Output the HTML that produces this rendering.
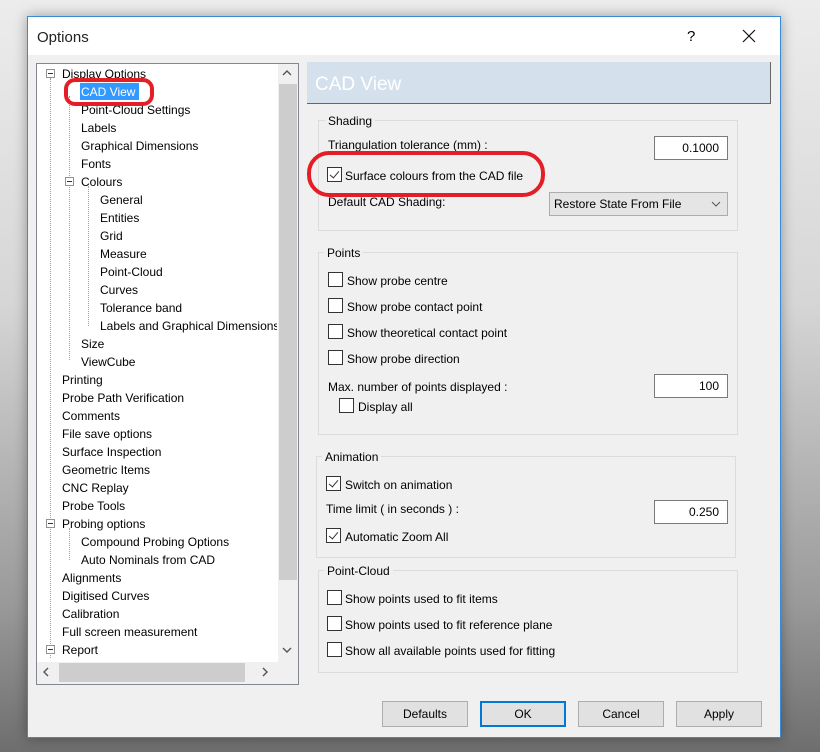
<!DOCTYPE html>
<html><head><meta charset="utf-8"><style>
*{box-sizing:border-box;margin:0;padding:0}
body{width:820px;height:752px;overflow:hidden;position:relative;font-family:"Liberation Sans",sans-serif;font-size:12px;color:#000;
background:linear-gradient(to bottom,#ececec 0%,#d6d6d6 40%,#9a9a9a 80%,#6e6e6e 100%)}
.a{position:absolute}
#dlg{left:27px;top:16px;width:754px;height:722px;background:#f0f0f0;border:1px solid #3b8ad6;box-shadow:0 0 12px rgba(0,0,0,.35)}
#title{left:0;top:0;width:752px;height:38px;background:#fff}
.t{position:absolute;white-space:nowrap;line-height:14px;margin-top:1px}
.tree{left:36px;top:63px;width:263px;height:622px;background:#fff;border:1px solid #828790;overflow:hidden}
.gb{position:absolute;border:1px solid #dcdcdc}
.gl{position:absolute;background:#f0f0f0;padding:0 3px;line-height:14px}
.cb{position:absolute;width:15px;height:15px;border:1px solid #333;background:#fff}
.cb.c::after{content:"";position:absolute;left:4px;top:1px;width:4px;height:8px;border:solid #333;border-width:0 1.3px 1.3px 0;transform:rotate(40deg)}
.in{position:absolute;height:24px;background:#fff;border:1px solid #7a7a7a;text-align:right;padding-right:8px;line-height:22px}
.btn{position:absolute;top:701px;width:86px;height:26px;background:#e1e1e1;border:1px solid #adadad;text-align:center;line-height:24px}
.dv{position:absolute;border-left:1px dotted #a0a0a0}
.pm{position:absolute;width:9px;height:9px;border:1px solid #919191;background:#fff}
.pm::after{content:"";position:absolute;left:1px;top:3px;width:5px;border-top:1px solid #333}
</style></head><body>
<div id="dlg" class="a">
 <div id="title" class="a"></div>
 <div class="t" style="left:9px;top:11px;font-size:15px;color:#222;line-height:18px">Options</div>
 <div class="t" style="left:659px;top:10px;font-size:15px;line-height:18px">?</div>
 <svg class="a" style="left:714px;top:12px" width="14" height="14"><path d="M1 1L13 13M13 1L1 13" stroke="#111" stroke-width="1.2"/></svg>
</div>

<div class="a tree">
 <div class="dv" style="left:13px;top:14px;height:580px"></div>
 <div class="dv" style="left:32px;top:32px;height:264px"></div>
 <div class="dv" style="left:51px;top:122px;height:140px"></div>
 <div class="dv" style="left:32px;top:464px;height:32px"></div>
 <div class="pm" style="left:9px;top:5px"></div>
 <div class="pm" style="left:28px;top:113px"></div>
 <div class="pm" style="left:9px;top:455px"></div>
 <div class="pm" style="left:9px;top:581px"></div>
</div>
<div class="a" style="left:278px;top:64px;width:20px;height:598px;background:#f0f0f0"></div>
<div class="a" style="left:279px;top:84px;width:18px;height:496px;background:#cdcdcd"></div>
<svg class="a" style="left:282px;top:69px" width="10" height="8"><path d="M1 6L5 2L9 6" stroke="#555" fill="none" stroke-width="1.4"/></svg>
<svg class="a" style="left:282px;top:646px" width="10" height="8"><path d="M1 2L5 6L9 2" stroke="#555" fill="none" stroke-width="1.4"/></svg>
<div class="a" style="left:37px;top:662px;width:261px;height:22px;background:#f0f0f0"></div>
<div class="a" style="left:59px;top:663px;width:186px;height:19px;background:#cdcdcd"></div>
<svg class="a" style="left:42px;top:667px" width="8" height="10"><path d="M6 1L2 5L6 9" stroke="#555" fill="none" stroke-width="1.4"/></svg>
<svg class="a" style="left:261px;top:667px" width="8" height="10"><path d="M2 1L6 5L2 9" stroke="#555" fill="none" stroke-width="1.4"/></svg>

<div class="a" style="left:80px;top:83px;width:59px;height:17px;background:#3399ff"></div>
<div class="t" style="left:62px;top:66px">Display Options</div>
<div class="t" style="left:81px;top:84px;color:#fff">CAD View</div>
<div class="t" style="left:81px;top:102px">Point-Cloud Settings</div>
<div class="t" style="left:81px;top:120px">Labels</div>
<div class="t" style="left:81px;top:138px">Graphical Dimensions</div>
<div class="t" style="left:81px;top:156px">Fonts</div>
<div class="t" style="left:81px;top:174px">Colours</div>
<div class="t" style="left:100px;top:192px">General</div>
<div class="t" style="left:100px;top:210px">Entities</div>
<div class="t" style="left:100px;top:228px">Grid</div>
<div class="t" style="left:100px;top:246px">Measure</div>
<div class="t" style="left:100px;top:264px">Point-Cloud</div>
<div class="t" style="left:100px;top:282px">Curves</div>
<div class="t" style="left:100px;top:300px">Tolerance band</div>
<div class="t" style="left:100px;top:318px;width:177px;overflow:hidden">Labels and Graphical Dimensions</div>
<div class="t" style="left:81px;top:336px">Size</div>
<div class="t" style="left:81px;top:354px">ViewCube</div>
<div class="t" style="left:62px;top:372px">Printing</div>
<div class="t" style="left:62px;top:390px">Probe Path Verification</div>
<div class="t" style="left:62px;top:408px">Comments</div>
<div class="t" style="left:62px;top:426px">File save options</div>
<div class="t" style="left:62px;top:444px">Surface Inspection</div>
<div class="t" style="left:62px;top:462px">Geometric Items</div>
<div class="t" style="left:62px;top:480px">CNC Replay</div>
<div class="t" style="left:62px;top:498px">Probe Tools</div>
<div class="t" style="left:62px;top:516px">Probing options</div>
<div class="t" style="left:81px;top:534px">Compound Probing Options</div>
<div class="t" style="left:81px;top:552px">Auto Nominals from CAD</div>
<div class="t" style="left:62px;top:570px">Alignments</div>
<div class="t" style="left:62px;top:588px">Digitised Curves</div>
<div class="t" style="left:62px;top:606px">Calibration</div>
<div class="t" style="left:62px;top:624px">Full screen measurement</div>
<div class="t" style="left:62px;top:642px">Report</div>

<div class="a" style="left:307px;top:62px;width:464px;height:42px;background:#d4e1ec;border-right:1px solid #666;border-bottom:1px solid #666"></div>
<div class="t" style="left:315px;top:73px;font-size:19px;color:#fff;line-height:22px">CAD View</div>

<div class="gb" style="left:318px;top:120px;width:420px;height:111px"></div>
<div class="gl" style="left:325px;top:114px">Shading</div>
<div class="t" style="left:328px;top:137px">Triangulation tolerance (mm) :</div>
<div class="in" style="left:654px;top:136px;width:74px">0.1000</div>
<div class="cb c" style="left:327px;top:167px"></div>
<div class="t" style="left:345px;top:168px">Surface colours from the CAD file</div>
<div class="t" style="left:328px;top:194px">Default CAD Shading:</div>
<div class="a" style="left:549px;top:192px;width:179px;height:24px;background:#e5e5e5;border:1px solid #acacac;line-height:22px;padding-left:4px">Restore State From File</div>
<svg class="a" style="left:711px;top:201px" width="10" height="6"><path d="M1 1L5 5L9 1" stroke="#555" fill="none"/></svg>

<div class="gb" style="left:318px;top:252px;width:420px;height:183px"></div>
<div class="gl" style="left:324px;top:246px">Points</div>
<div class="cb" style="left:328px;top:272px"></div><div class="t" style="left:347px;top:273px">Show probe centre</div>
<div class="cb" style="left:328px;top:298px"></div><div class="t" style="left:347px;top:299px">Show probe contact point</div>
<div class="cb" style="left:328px;top:324px"></div><div class="t" style="left:347px;top:325px">Show theoretical contact point</div>
<div class="cb" style="left:328px;top:350px"></div><div class="t" style="left:347px;top:351px">Show probe direction</div>
<div class="t" style="left:328px;top:379px">Max. number of points displayed :</div>
<div class="in" style="left:654px;top:374px;width:74px">100</div>
<div class="cb" style="left:339px;top:398px"></div><div class="t" style="left:358px;top:399px">Display all</div>

<div class="gb" style="left:316px;top:456px;width:420px;height:102px"></div>
<div class="gl" style="left:322px;top:450px">Animation</div>
<div class="cb c" style="left:326px;top:476px"></div><div class="t" style="left:345px;top:477px">Switch on animation</div>
<div class="t" style="left:326px;top:501px">Time limit ( in seconds ) :</div>
<div class="in" style="left:654px;top:500px;width:74px">0.250</div>
<div class="cb c" style="left:326px;top:528px"></div><div class="t" style="left:345px;top:529px">Automatic Zoom All</div>

<div class="gb" style="left:318px;top:570px;width:420px;height:103px"></div>
<div class="gl" style="left:324px;top:564px">Point-Cloud</div>
<div class="cb" style="left:327px;top:590px"></div><div class="t" style="left:345px;top:591px">Show points used to fit items</div>
<div class="cb" style="left:327px;top:616px"></div><div class="t" style="left:345px;top:617px">Show points used to fit reference plane</div>
<div class="cb" style="left:327px;top:642px"></div><div class="t" style="left:345px;top:643px">Show all available points used for fitting</div>

<div class="btn" style="left:382px">Defaults</div>
<div class="btn" style="left:480px;border:2px solid #0078d7;line-height:22px">OK</div>
<div class="btn" style="left:578px">Cancel</div>
<div class="btn" style="left:676px">Apply</div>

<svg class="a" style="left:0;top:0" width="820" height="752">
<rect x="66" y="80" width="86" height="24" rx="9" fill="none" stroke="#e31e26" stroke-width="4"/>
<rect x="309" y="153" width="234" height="42" rx="20" fill="none" stroke="#e31e26" stroke-width="4"/>
</svg>
</body></html>
